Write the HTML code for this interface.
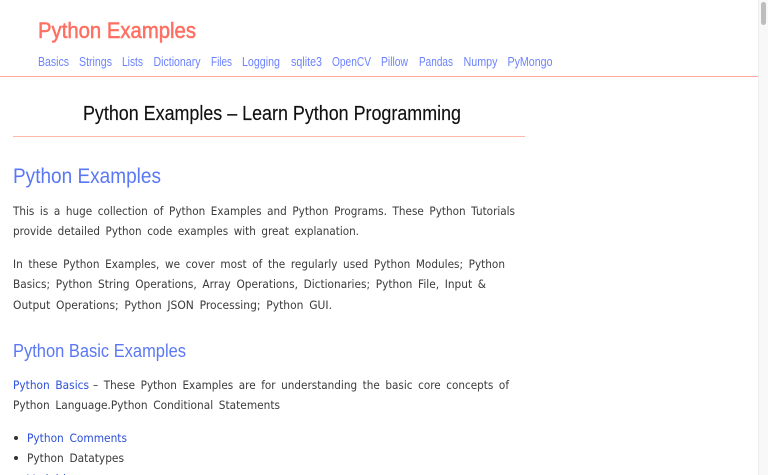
<!DOCTYPE html>
<html lang="en">
<head>
<meta charset="utf-8">
<title>Python Examples</title>
<style>
html,body{margin:0;padding:0;background:#fff;width:768px;height:475px;overflow:hidden}
#p{position:relative;width:768px;height:475px;overflow:hidden}
svg{position:absolute;left:0;top:0}
svg text{font-family:"Liberation Sans",sans-serif}
svg .b text{font-family:"DejaVu Sans",sans-serif;word-spacing:2.5px}
.d{position:absolute;left:14px;width:4px;height:4px;border-radius:50%;background:#333}
.r{position:absolute}
</style>
</head>
<body>
<div id="p">
<svg width="768" height="475" viewBox="0 0 768 475">
<text x="38" y="38" font-size="22" fill="#ff6f61" stroke="#ff6f61" stroke-width=".5" textLength="158" lengthAdjust="spacingAndGlyphs">Python Examples</text>
<g font-size="12.500" fill="#6c82ff">
<text x="38" y="66" textLength="31" lengthAdjust="spacingAndGlyphs">Basics</text>
<text x="79" y="66" textLength="33" lengthAdjust="spacingAndGlyphs">Strings</text>
<text x="122" y="66" textLength="21" lengthAdjust="spacingAndGlyphs">Lists</text>
<text x="153.500" y="66" textLength="47" lengthAdjust="spacingAndGlyphs">Dictionary</text>
<text x="211" y="66" textLength="21" lengthAdjust="spacingAndGlyphs">Files</text>
<text x="242" y="66" textLength="38" lengthAdjust="spacingAndGlyphs">Logging</text>
<text x="291" y="66" textLength="31" lengthAdjust="spacingAndGlyphs">sqlite3</text>
<text x="332" y="66" textLength="39" lengthAdjust="spacingAndGlyphs">OpenCV</text>
<text x="381" y="66" textLength="27" lengthAdjust="spacingAndGlyphs">Pillow</text>
<text x="419" y="66" textLength="34" lengthAdjust="spacingAndGlyphs">Pandas</text>
<text x="463.500" y="66" textLength="34" lengthAdjust="spacingAndGlyphs">Numpy</text>
<text x="507.500" y="66" textLength="45" lengthAdjust="spacingAndGlyphs">PyMongo</text>
</g>
<text x="83" y="120" font-size="20" fill="#111" stroke="#111" stroke-width=".15" textLength="378" lengthAdjust="spacingAndGlyphs">Python Examples – Learn Python Programming</text>
<text x="13" y="183" font-size="21" fill="#5a78f5" textLength="148" lengthAdjust="spacingAndGlyphs">Python Examples</text>
<text x="13" y="357" font-size="18" fill="#5a78f5" textLength="173" lengthAdjust="spacingAndGlyphs">Python Basic Examples</text>
<g class="b" font-size="11.500" fill="#3a3a3a">
<text x="13" y="215" textLength="502" lengthAdjust="spacingAndGlyphs">This is a huge collection of Python Examples and Python Programs. These Python Tutorials</text>
<text x="13" y="235" textLength="346" lengthAdjust="spacingAndGlyphs">provide detailed Python code examples with great explanation.</text>
<text x="13" y="268" textLength="492" lengthAdjust="spacingAndGlyphs">In these Python Examples, we cover most of the regularly used Python Modules; Python</text>
<text x="13" y="288" textLength="473" lengthAdjust="spacingAndGlyphs">Basics; Python String Operations, Array Operations, Dictionaries; Python File, Input &amp;</text>
<text x="13" y="309" textLength="319" lengthAdjust="spacingAndGlyphs">Output Operations; Python JSON Processing; Python GUI.</text>
<text x="13" y="389" textLength="76" lengthAdjust="spacingAndGlyphs" fill="#2b4fd8">Python Basics</text>
<text x="93" y="389" textLength="416" lengthAdjust="spacingAndGlyphs">– These Python Examples are for understanding the basic core concepts of</text>
<text x="13" y="409" textLength="267" lengthAdjust="spacingAndGlyphs">Python Language.Python Conditional Statements</text>
<text x="27" y="442" textLength="100" lengthAdjust="spacingAndGlyphs" fill="#2b4fd8">Python Comments</text>
<text x="27" y="462" textLength="97" lengthAdjust="spacingAndGlyphs">Python Datatypes</text>
<text x="27" y="483" textLength="52" lengthAdjust="spacingAndGlyphs" fill="#2b4fd8">Variables</text>
</g>
</svg>
<div class="r" style="left:0;top:76px;width:758px;height:1px;background:#ffa899"></div>
<div class="r" style="left:13px;top:136px;width:512px;height:1px;background:#ffb8a8"></div>
<div class="d" style="top:436px"></div>
<div class="d" style="top:456px"></div>
<div class="r" style="left:758px;top:0;width:9px;height:475px;background:#f8f8f8;border-left:1px solid #eee"></div>
<div class="r" style="left:761px;top:2px;width:5px;height:23px;background:#bdbdbd;border-radius:3px"></div>
</div>
</body>
</html>
